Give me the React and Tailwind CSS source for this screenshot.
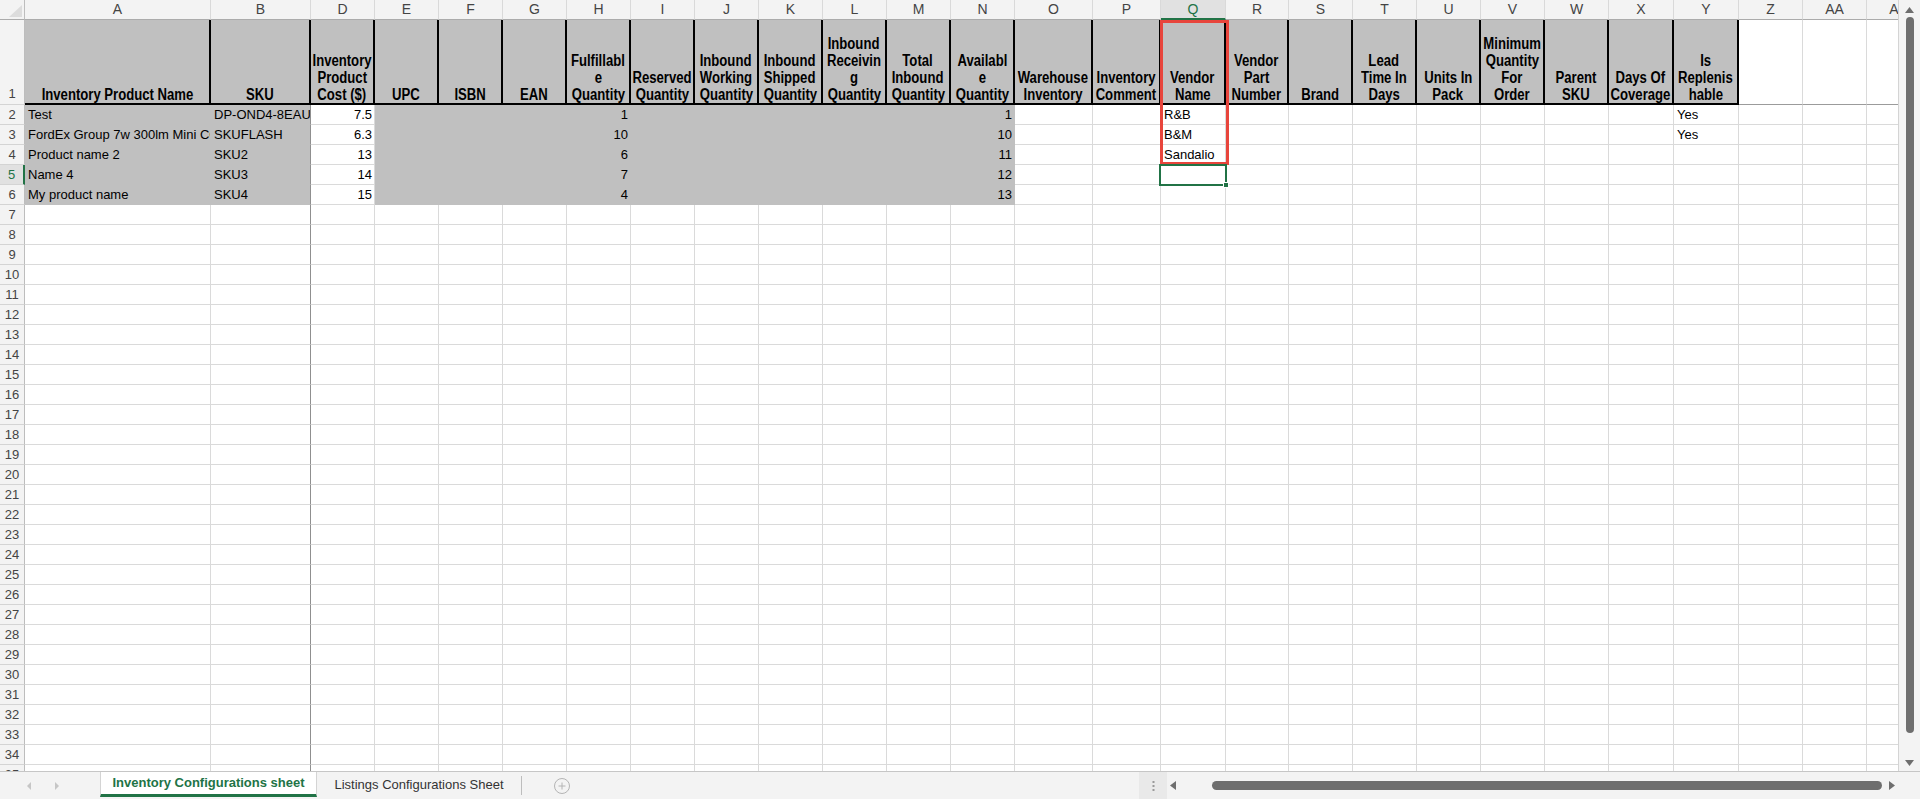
import React from 'react';

const COLS = [
  { l: 'A', w: 'w-[186px]', h: ['Inventory Product Name'] },
  { l: 'B', w: 'w-[100px]', h: ['SKU'] },
  { l: 'D', w: 'w-[64px]', h: ['Inventory', 'Product', 'Cost ($)'] },
  { l: 'E', w: 'w-[64px]', h: ['UPC'] },
  { l: 'F', w: 'w-[64px]', h: ['ISBN'] },
  { l: 'G', w: 'w-[64px]', h: ['EAN'] },
  { l: 'H', w: 'w-[64px]', h: ['Fulfillabl', 'e', 'Quantity'] },
  { l: 'I', w: 'w-[64px]', h: ['Reserved', 'Quantity'] },
  { l: 'J', w: 'w-[64px]', h: ['Inbound', 'Working', 'Quantity'] },
  { l: 'K', w: 'w-[64px]', h: ['Inbound', 'Shipped', 'Quantity'] },
  { l: 'L', w: 'w-[64px]', h: ['Inbound', 'Receivin', 'g', 'Quantity'] },
  { l: 'M', w: 'w-[64px]', h: ['Total', 'Inbound', 'Quantity'] },
  { l: 'N', w: 'w-[64px]', h: ['Availabl', 'e', 'Quantity'] },
  { l: 'O', w: 'w-[78px]', h: ['Warehouse', 'Inventory'] },
  { l: 'P', w: 'w-[68px]', h: ['Inventory', 'Comment'] },
  { l: 'Q', w: 'w-[65px]', h: ['Vendor', 'Name'] },
  { l: 'R', w: 'w-[63px]', h: ['Vendor', 'Part', 'Number'] },
  { l: 'S', w: 'w-[64px]', h: ['Brand'] },
  { l: 'T', w: 'w-[64px]', h: ['Lead', 'Time In', 'Days'] },
  { l: 'U', w: 'w-[64px]', h: ['Units In', 'Pack'] },
  { l: 'V', w: 'w-[64px]', h: ['Minimum', 'Quantity', 'For', 'Order'] },
  { l: 'W', w: 'w-[64px]', h: ['Parent', 'SKU'] },
  { l: 'X', w: 'w-[65px]', h: ['Days Of', 'Coverage'] },
  { l: 'Y', w: 'w-[65px]', h: ['Is', 'Replenis', 'hable'] },
  { l: 'Z', w: 'w-[64px]', h: null },
  { l: 'AA', w: 'w-[64px]', h: null },
  { l: 'AB', w: 'w-[64px]', h: null },
];

const GRAY = ['A', 'B', 'E', 'F', 'G', 'H', 'I', 'J', 'K', 'L', 'M', 'N'];
const NUMERIC = ['D', 'H', 'N'];

const DATA = [
  { A: 'Test', B: 'DP-OND4-8EAU', D: '7.5', H: '1', N: '1', Q: 'R&B', Y: 'Yes' },
  { A: 'FordEx Group 7w 300lm Mini COB LED Flashlight', B: 'SKUFLASH', D: '6.3', H: '10', N: '10', Q: 'B&M', Y: 'Yes' },
  { A: 'Product name 2', B: 'SKU2', D: '13', H: '6', N: '11', Q: 'Sandalio' },
  { A: 'Name 4', B: 'SKU3', D: '14', H: '7', N: '12' },
  { A: 'My product name', B: 'SKU4', D: '15', H: '4', N: '13' },
];

// row 35 is only a sliver at the bottom, so it gets no number
const ROWS = Array.from({ length: 34 }, (_, i) => i + 2);

function RowHead({ n, tall, label = n }) {
  const sel = n === 5;
  return (
    <div
      className={
        'w-[25px] shrink-0 flex justify-center border-b border-b-[#d4d4d4] ' +
        (tall ? 'items-end pb-[1px] ' : 'items-center ') +
        (sel
          ? 'border-r-2 border-r-[#217346] bg-[#e1e1e1] text-[#217346]'
          : 'border-r border-r-[#bdbdbd] bg-[#f3f3f3] text-[#444]')
      }
    >
      {label}
    </div>
  );
}

function LetterRow() {
  return (
    <div className="flex h-[20px]">
      <div className="w-[25px] shrink-0 bg-[#f3f3f3] border-r border-r-[#bdbdbd] border-b border-b-[#ababab] flex items-end justify-end pr-[2px] pb-[2px]">
        <svg width="13" height="12" viewBox="0 0 13 12">
          <polygon points="13,0 13,12 0,12" fill="#dcdcdc" />
        </svg>
      </div>
      {COLS.map(c => {
        const sel = c.l === 'Q';
        return (
          <div
            key={c.l}
            className={
              c.w +
              ' shrink-0 flex items-center justify-center border-r border-r-[#d9d9d9] text-[14px] ' +
              (sel
                ? 'bg-[#e1e1e1] text-[#217346] border-b-2 border-b-[#217346]'
                : 'bg-[#f3f3f3] text-[#444] border-b border-b-[#ababab]')
            }
          >
            {c.l}
          </div>
        );
      })}
    </div>
  );
}

function HeaderRow() {
  return (
    <div className="flex h-[85px]">
      <RowHead n={1} tall />
      {COLS.map(c =>
        c.h ? (
          <div
            key={c.l}
            className={
              c.w +
              ' shrink-0 bg-[#c0c0c0] border-r-2 border-b-2 border-black flex flex-col justify-end items-center font-bold text-[16px] leading-[17px] text-black'
            }
          >
            {c.h.map((t, i) => (
              <div key={i} className="whitespace-nowrap scale-x-[0.82]">{t}</div>
            ))}
          </div>
        ) : (
          <div key={c.l} className={c.w + ' shrink-0 border-r border-r-[#dadada] border-b border-b-[#9b9b9b]'} />
        )
      )}
    </div>
  );
}

function DataRow({ n, label }) {
  const d = DATA[n - 2] || {};
  const filled = n <= 6;
  return (
    <div className="flex h-[20px]">
      <RowHead n={n} label={label} />
      {COLS.map(c => {
        const gray = filled && GRAY.includes(c.l);
        const right = c.l === 'B' ? 'border-r-[#8f8f8f]' : gray ? 'border-r-[#c0c0c0]' : 'border-r-[#dadada]';
        const bottom = gray ? 'border-b-[#c0c0c0]' : 'border-b-[#dadada]';
        const num = NUMERIC.includes(c.l);
        return (
          <div
            key={c.l}
            className={
              c.w +
              ' shrink-0 flex items-center overflow-hidden whitespace-nowrap border-r border-b text-black text-[13px] pt-[1px] ' +
              right + ' ' + bottom + ' ' +
              (gray ? 'bg-[#c0c0c0] ' : 'bg-white ') +
              (num ? 'justify-end pr-[2px]' : 'pl-[3px]')
            }
          >
            {d[c.l]}
          </div>
        );
      })}
    </div>
  );
}

function Tri({ dir, color, w = 4, h = 7 }) {
  const pts = dir === 'left' ? `${w},0 ${w},${h} 0,${h / 2}` : dir === 'right' ? `0,0 0,${h} ${w},${h / 2}` : dir === 'up' ? `0,${h} ${w},${h} ${w / 2},0` : `0,0 ${w},0 ${w / 2},${h}`;
  return (
    <svg width={w} height={h} viewBox={`0 0 ${w} ${h}`} className="shrink-0">
      <polygon points={pts} fill={color} />
    </svg>
  );
}

export default function App() {
  return (
    <div className="w-[1920px] h-[799px] flex flex-col bg-white overflow-hidden font-['Liberation_Sans',Arial,sans-serif] text-[13px]">
      <div className="flex h-[771px]">
        <div className="relative flex-1 overflow-hidden">
          <LetterRow />
          <HeaderRow />
          {ROWS.map(n => (
            <DataRow key={n} n={n} label={n} />
          ))}
          <DataRow n={35} label="" />
          {/* annotation box */}
          <div className="absolute left-[1160px] top-[20px] w-[69px] h-[145px] border-[3px] border-[#e8453c]" />
          {/* active cell */}
          <div className="absolute left-[1159px] top-[164px] w-[68px] h-[22px] border-2 border-[#217346]">
            <div className="absolute -right-[4px] -bottom-[4px] w-[6px] h-[6px] bg-[#217346] border border-white" />
          </div>
        </div>
        <div className="w-[22px] shrink-0 bg-[#f3f3f3] border-l border-l-[#d4d4d4] flex flex-col items-center pt-[7px]">
          <Tri dir="up" color="#6e6e6e" w={9} h={6} />
          <div className="mt-[4px] w-[8px] h-[716px] rounded-full bg-[#6e6e6e]" />
          <div className="mt-[27px]">
            <Tri dir="down" color="#6e6e6e" w={9} h={6} />
          </div>
        </div>
      </div>

      <div className="h-[28px] flex bg-[#f3f3f3] border-t border-t-[#c6c6c6]">
        <div className="w-[100px] shrink-0 flex items-center pl-[27px] gap-[24px]">
          <Tri dir="left" color="#c6c6c6" w={4} h={8} />
          <Tri dir="right" color="#c6c6c6" w={4} h={8} />
        </div>
        <div className="w-[217px] h-[25px] shrink-0 bg-white border-x border-x-[#d4d4d4] border-b-[3px] border-b-[#217346] flex items-center justify-center font-bold text-[#217346]">
          Inventory Configurations sheet
        </div>
        <div className="w-[204px] h-[26px] shrink-0 flex items-center justify-center text-[#333]">
          Listings Configurations Sheet
        </div>
        <div className="w-px h-[19px] self-center bg-[#bdbdbd]" />
        <div className="ml-[32px] flex items-center">
          <svg width="16" height="16" viewBox="0 0 16 16">
            <circle cx="8" cy="8" r="7.5" fill="none" stroke="#b4b4b4" strokeWidth="1" />
            <path d="M8 4.5v7M4.5 8h7" stroke="#b4b4b4" strokeWidth="1" />
          </svg>
        </div>
        <div className="flex-1" />
        <div className="w-[28px] shrink-0 bg-[#e9e9e9] flex items-center justify-center">
          <svg width="3" height="10" viewBox="0 0 3 10">
            <rect x="0.5" y="0" width="2" height="2" fill="#9a9a9a" />
            <rect x="0.5" y="4" width="2" height="2" fill="#9a9a9a" />
            <rect x="0.5" y="8" width="2" height="2" fill="#9a9a9a" />
          </svg>
        </div>
        <div className="w-[731px] shrink-0 flex items-center pl-[3px]">
          <Tri dir="left" color="#6e6e6e" w={6} h={9} />
          <div className="ml-[36px] w-[670px] h-[9px] rounded-full bg-[#6e6e6e]" />
          <div className="ml-[7px]">
            <Tri dir="right" color="#6e6e6e" w={6} h={9} />
          </div>
        </div>
        <div className="w-[22px] shrink-0" />
      </div>
    </div>
  );
}
